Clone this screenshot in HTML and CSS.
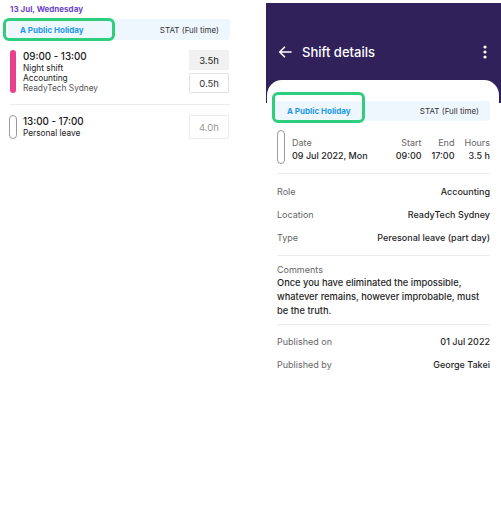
FILE: index.html
```html
<!DOCTYPE html>
<html>
<head>
<meta charset="utf-8">
<link rel="stylesheet" href="styles.css">
</head>
<body>
<div class="page">
  <section class="day">
    <div class="day-title">13 Jul, Wednesday</div>
    <div class="holiday holiday-left">
      <span class="holiday-name">A Public Holiday</span>
      <span class="holiday-type">STAT (Full time)</span>
      <span class="mark mark-left"></span>
    </div>
    <div class="shift">
      <span class="bar bar-pink"></span>
      <div class="shift-info">
        <div class="shift-time">09:00 - 13:00</div>
        <div class="shift-line">Night shift</div>
        <div class="shift-line">Accounting</div>
        <div class="shift-line muted">ReadyTech Sydney</div>
      </div>
      <div class="hours">
        <div class="hbox hbox-fill">3.5h</div>
        <div class="hbox hbox-line">0.5h</div>
      </div>
    </div>
    <div class="sep"></div>
    <div class="shift shift-leave">
      <span class="bar bar-outline"></span>
      <div class="shift-info">
        <div class="shift-time">13:00 - 17:00</div>
        <div class="shift-line">Personal leave</div>
      </div>
      <div class="hours">
        <div class="hbox hbox-light">4.0h</div>
      </div>
    </div>
  </section>

  <section class="detail">
    <header class="appbar">
      <svg class="back" width="14" height="12" viewBox="0 0 14 12"><path d="M13 6H2M6.5 1.2L1.7 6l4.8 4.8" fill="none" stroke="#fff" stroke-width="1.6" stroke-linecap="round" stroke-linejoin="round"/></svg>
      <span class="appbar-title">Shift details</span>
      <svg class="kebab" width="4" height="14" viewBox="0 0 4 14"><circle cx="2" cy="2" r="1.6" fill="#fff"/><circle cx="2" cy="7" r="1.6" fill="#fff"/><circle cx="2" cy="12" r="1.6" fill="#fff"/></svg>
    </header>
    <div class="card">
      <div class="holiday holiday-right">
        <span class="holiday-name">A Public Holiday</span>
        <span class="holiday-type">STAT (Full time)</span>
        <span class="mark mark-right"></span>
      </div>
      <div class="when">
        <span class="bar bar-outline tall"></span>
        <div class="col col-date">
          <div class="lbl">Date</div>
          <div class="val">09 Jul 2022, Mon</div>
        </div>
        <div class="col col-r">
          <div class="lbl">Start</div>
          <div class="val">09:00</div>
        </div>
        <div class="col col-r">
          <div class="lbl">End</div>
          <div class="val">17:00</div>
        </div>
        <div class="col col-r">
          <div class="lbl">Hours</div>
          <div class="val">3.5 h</div>
        </div>
      </div>
      <div class="group">
        <div class="row"><span class="lbl">Role</span><span class="val">Accounting</span></div>
        <div class="row"><span class="lbl">Location</span><span class="val">ReadyTech Sydney</span></div>
        <div class="row"><span class="lbl">Type</span><span class="val">Peresonal leave (part day)</span></div>
      </div>
      <div class="group comments">
        <div class="lbl">Comments</div>
        <p class="comment">Once you have eliminated the impossible, whatever remains, however improbable, must be the truth.</p>
      </div>
      <div class="group last">
        <div class="row"><span class="lbl">Published on</span><span class="val">01 Jul 2022</span></div>
        <div class="row"><span class="lbl">Published by</span><span class="val">George Takei</span></div>
      </div>
    </div>
  </section>
</div>
</body>
</html>
```

FILE: styles.css
```css
* { box-sizing: border-box; }
html, body { margin: 0; padding: 0; background: #fff; }
body {
  font-family: Inter, "Noto Sans", sans-serif;
  color: #1f1f1f;
  width: 501px;
  height: 509px;
  overflow: hidden;
}
.page {
  display: flex;
  align-items: flex-start;
}

/* ---------- left day list ---------- */
.day {
  width: 240px;
  padding: 4px 10px 0 10px;
}
.day-title {
  font-size: 8px;
  font-weight: 700;
  color: #6a45c7;
  line-height: 10px;
  height: 15px;
}
.holiday {
  position: relative;
  display: flex;
  justify-content: space-between;
  align-items: center;
  background: #eef6fe;
  border-radius: 3px;
  font-size: 8px;
}
.holiday-left {
  margin-left: -2px;
  height: 21px;
  padding: 0 11px 0 12px;
}
.holiday-name {
  color: #1d9ae6;
  font-weight: 700;
}
.holiday-type {
  color: #333;
}
.mark {
  position: absolute;
  border: 3px solid #2fce7e;
  border-radius: 6px;
}
.mark-left {
  left: -5px;
  top: -1px;
  width: 112px;
  height: 23px;
}

.shift {
  display: flex;
  align-items: flex-start;
  margin-top: 10px;
}
.bar {
  flex: none;
  width: 6px;
  border-radius: 3px;
}
.bar-pink {
  height: 43px;
  background: #ea3f8d;
}
.bar-outline {
  width: 8px;
  height: 24px;
  margin-left: -1px;
  border: 1px solid #9a9a9a;
  border-radius: 4px;
}
.shift-info {
  flex: 1;
  padding-left: 7px;
}
.shift-leave .shift-info { padding-left: 6px; }
.shift-time {
  font-size: 9.8px;
  font-weight: 500;
  line-height: 13px;
  color: #1a1a1a;
}
.shift-line {
  font-size: 8.3px;
  line-height: 10px;
  color: #222;
}
.shift-line.muted { color: #555; }
.hours {
  display: flex;
  flex-direction: column;
  gap: 3px;
  margin-right: 1px;
}
.hbox {
  width: 40px;
  height: 20px;
  display: flex;
  align-items: center;
  justify-content: center;
  font-size: 9.5px;
  color: #222;
  border-radius: 1px;
}
.hbox-fill { background: #f1f1f1; }
.hbox-line { border: 1px solid #e3e3e3; color: #333; }
.hbox-light { border: 1px solid #ececec; color: #999; height: 24px; }
.sep {
  height: 1px;
  background: #e9e9e9;
  margin-top: 11px;
}
.shift-leave { margin-top: 10px; }

/* ---------- right detail screen ---------- */
.detail {
  margin-left: 26px;
  width: 235px;
  margin-top: 3px;
  background: linear-gradient(#30215b 0, #30215b 100px, #fff 100px);
}
.appbar {
  height: 77px;
  display: flex;
  align-items: center;
  padding: 20px 14px 0 12px;
}
.back { flex: none; }
.appbar-title {
  flex: 1;
  margin-left: 10px;
  color: #fff;
  font-size: 13px;
  font-weight: 500;
}
.kebab { flex: none; }
.card {
  background: #fff;
  border-radius: 15px 15px 0 0;
  margin: 0 2px 0 1px;
  padding: 21px 9px 120px 10px;
}
.holiday-right {
  height: 20px;
  padding: 0 11px 0 12px;
  margin-left: -2px;
}
.mark-right {
  left: -3px;
  top: -9px;
  width: 93px;
  height: 31px;
}
.when {
  display: flex;
  align-items: flex-start;
  margin-top: 9px;
  padding-bottom: 9px;
  border-bottom: 1px solid #ececec;
}
.bar-outline.tall {
  height: 34px;
  margin-left: 0;
}
.col { font-size: 9px; line-height: 13px; }
.col-date { flex: 1; padding-left: 7px; padding-top: 6px; }
.col-r { text-align: right; padding-top: 6px; margin-left: 10px; }
.lbl { color: #666; font-size: 9px; }
.val { color: #1f1f1f; font-weight: 500; font-size: 9px; }
.group {
  border-bottom: 1px solid #ececec;
  padding: 6px 0 6px;
}
.row {
  display: flex;
  justify-content: space-between;
  align-items: center;
  height: 23px;
  font-size: 9px;
}
.comments { padding: 7px 0 6px; }
.comments .lbl { line-height: 13px; }
.comment {
  margin: 0;
  font-size: 9.3px;
  font-weight: 500;
  line-height: 14px;
  color: #1f1f1f;
}
.group.last { border-bottom: none; padding-top: 5px; }
```
